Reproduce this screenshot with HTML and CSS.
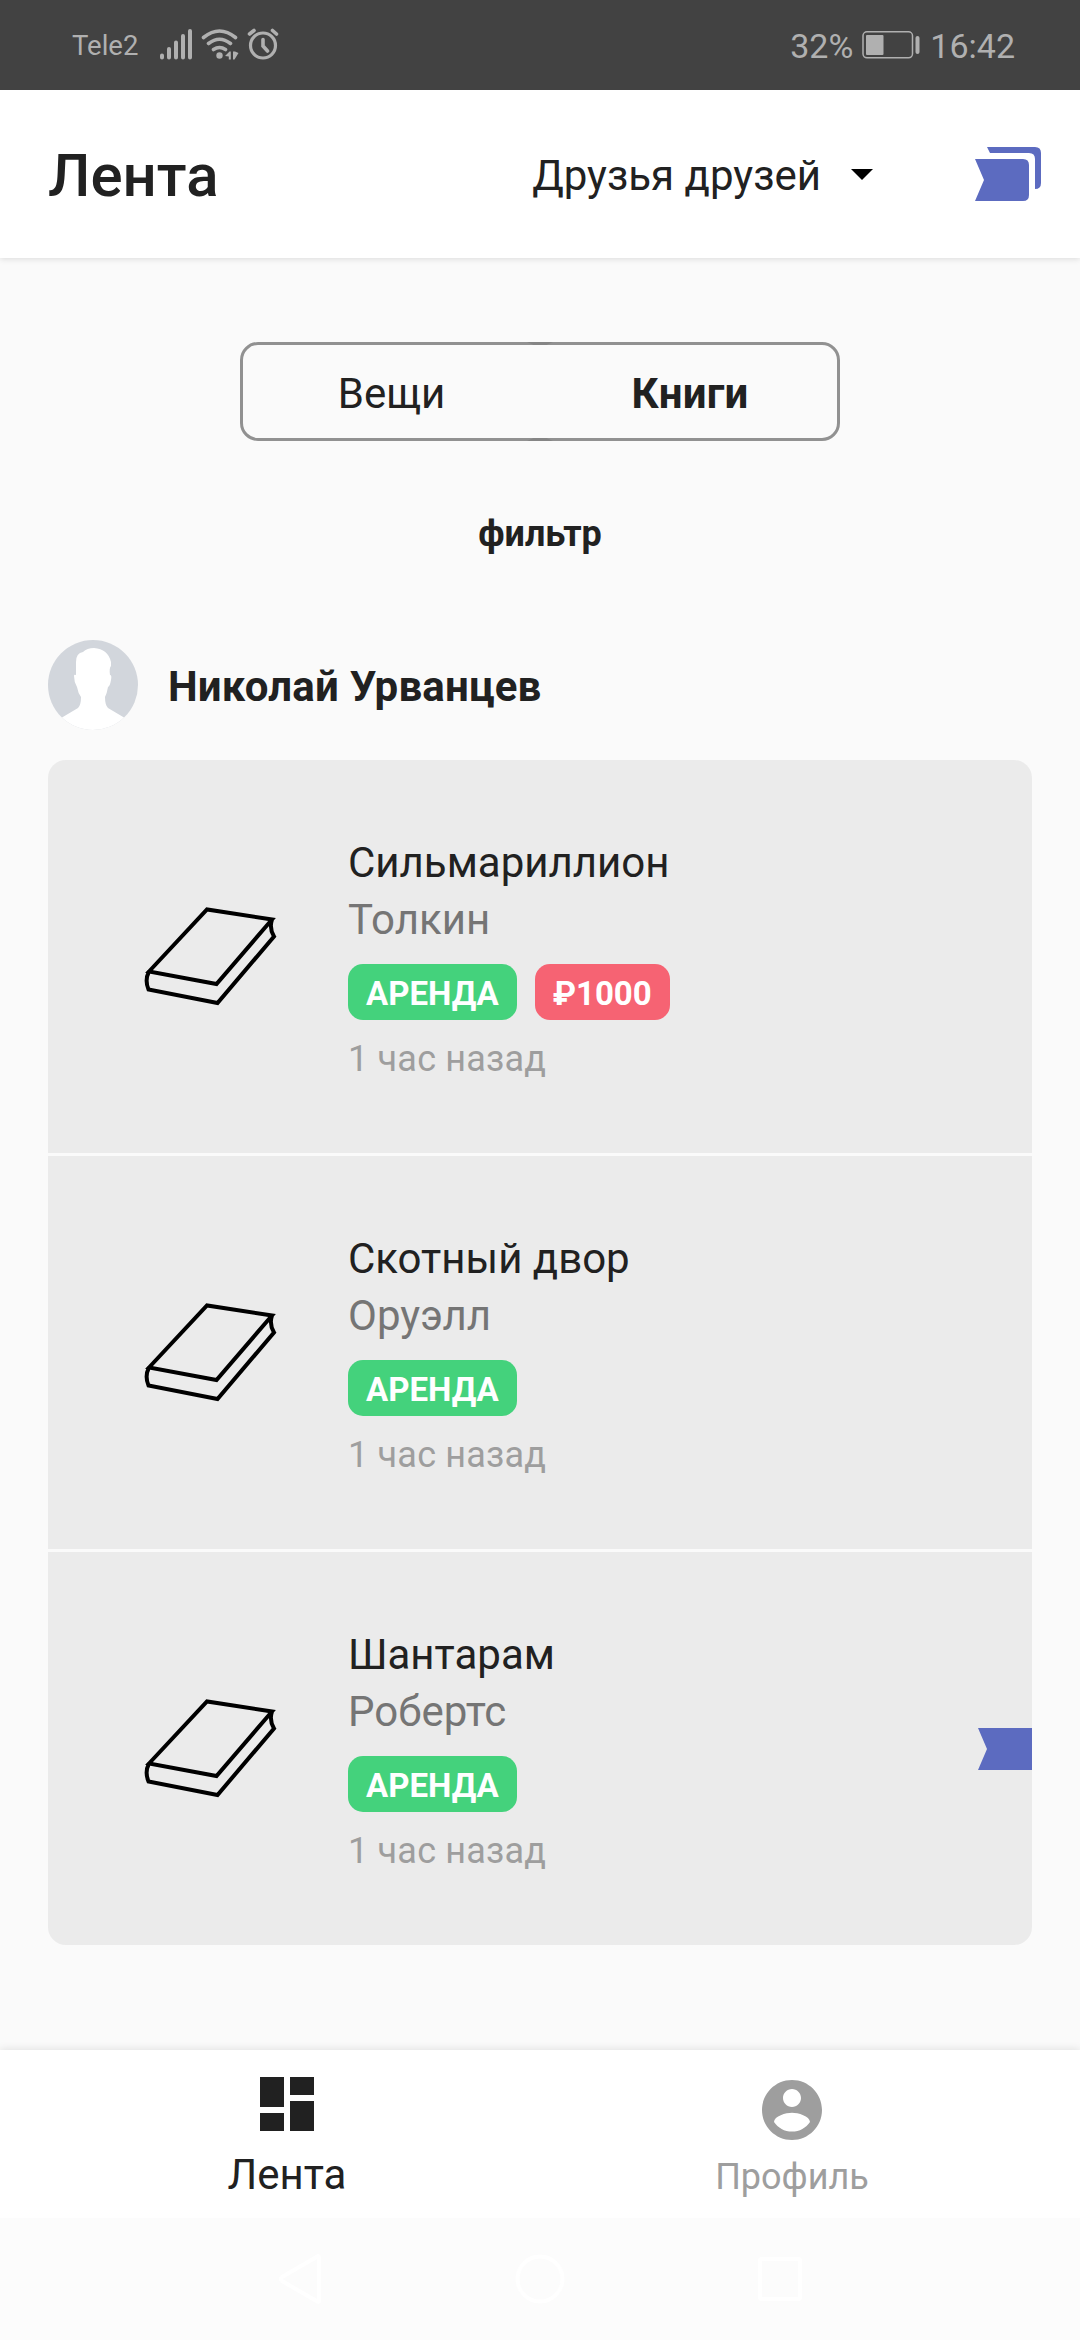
FILE: index.html
```html
<!DOCTYPE html>
<html lang="ru">
<head>
<meta charset="utf-8">
<title>Лента</title>
<link rel="stylesheet" href="styles.css">
</head>
<body>
<div class="status">
  <span class="carrier">Tele2</span>
  <svg class="status-icons" width="122" height="36" viewBox="158 28 122 36" fill="none" stroke="#b0b0b0" stroke-linecap="round">
    <path stroke-width="4" d="M162 56.500v2M169 50v8.500M176 43.500v15M183 37v21.500M190 32v26.500"/>
    <path stroke-width="3.600" d="M203.500 38.500Q219.500 25.500 235.500 38.500M208.500 44.500Q219.500 36 230.500 44.500M213.500 50.500Q219.500 46.500 225.500 50.500"/>
    <circle cx="219.500" cy="56.500" r="3.200" fill="#b0b0b0" stroke="none"/>
    <path fill="#b0b0b0" stroke="none" d="M225 57l4.500-4.500h1.300V60.500h-2v-3zM233 52.500h2l3.500 1.500-4 6.500h-1.500z"/>
    <circle cx="263" cy="46.500" r="12.500" stroke-width="3.200"/>
    <path stroke-width="3.600" d="M263 40.500v6.500l4.500 5M249.500 35l4.500-3.500M272.500 31.500l4 3.500"/>
  </svg>
  <span class="status-right">
    <span>32%</span>
    <svg class="battery" width="60" height="30" viewBox="0 0 60 30" fill="none">
      <rect x="1" y="1.800" width="49.500" height="26" rx="4" stroke="#b0b0b0" stroke-width="1.500"/>
      <rect x="4" y="5" width="17.500" height="20" rx="1" fill="#b0b0b0"/>
      <rect x="53.500" y="6" width="4" height="18" rx="2" fill="#b0b0b0"/>
    </svg>
    <span>16:42</span>
  </span>
</div>

<header class="header">
  <h1>Лента</h1>
  <div class="audience"><span>Друзья друзей</span><i class="caret"></i></div>
  <svg class="tags" width="66" height="54" viewBox="0 0 66 54" fill="#5c6bc0">
    <path d="M0 12H48Q54 12 54 18V48Q54 54 48 54H0L9 33Z"/>
    <path d="M12 0H60Q66 0 66 6V36Q66 42 60 42V12Q60 6 54 6H15Z"/>
  </svg>
</header>

<main class="feed">
  <div class="segments">
    <div class="segment">Вещи</div>
    <div class="segment active">Книги</div>
  </div>
  <div class="filter">фильтр</div>
  <div class="owner">
    <svg class="avatar" width="90" height="90" viewBox="0 0 90 90">
      <clipPath id="round"><circle cx="45" cy="45" r="45"/></clipPath>
      <g clip-path="url(#round)">
        <rect width="90" height="90" fill="#d2d6dc"/>
        <path fill="#fff" d="M28 35V22Q28 13 35 12Q39 8 46 8Q60 9 63 22V26Q61 28 62 35Q64 35 63 40Q62 46 60 47Q59 53 57 57Q57 65 60 68L76 77.500L80 90H10L14 77.500L30 68Q33 65 33 57Q30 53 29 47Q26 42 26 36Q26 34 28 35Z"/>
      </g>
    </svg>
    <span>Николай Урванцев</span>
  </div>

  <svg class="symbols" width="0" height="0">
    <symbol id="book" viewBox="0 0 134 108">
      <path fill="none" stroke="#000" stroke-width="4" d="M5 68.500L63 6.500L128 16.500L72.500 81ZM5 68.500Q0.500 77 4.500 86.500L73.500 100L130 33.500Q125 25 128 16.500"/>
    </symbol>
  </svg>

  <div class="cards">
    <article class="card">
      <svg class="book" width="134" height="108"><use href="#book"/></svg>
      <div class="info">
        <div class="title">Сильмариллион</div>
        <div class="author">Толкин</div>
        <div class="badges"><span class="badge rent">АРЕНДА</span><span class="badge price">₽1000</span></div>
        <div class="time">1 час назад</div>
      </div>
    </article>
    <article class="card">
      <svg class="book" width="134" height="108"><use href="#book"/></svg>
      <div class="info">
        <div class="title">Скотный двор</div>
        <div class="author">Оруэлл</div>
        <div class="badges"><span class="badge rent">АРЕНДА</span></div>
        <div class="time">1 час назад</div>
      </div>
    </article>
    <article class="card">
      <svg class="book" width="134" height="108"><use href="#book"/></svg>
      <div class="info">
        <div class="title">Шантарам</div>
        <div class="author">Робертс</div>
        <div class="badges"><span class="badge rent">АРЕНДА</span></div>
        <div class="time">1 час назад</div>
      </div>
      <svg class="ribbon" width="54" height="42" viewBox="0 0 54 42"><path fill="#5c6bc0" d="M0 0H54V42H0L9 21Z"/></svg>
    </article>
  </div>
</main>

<nav class="tabs">
  <div class="tab current">
    <svg width="72" height="72" viewBox="0 0 24 24" fill="#212121"><path d="M3 13h8V3H3v10zm0 8h8v-6H3v6zm10 0h8V11h-8v10zm0-18v6h8V3h-8z"/></svg>
    <span>Лента</span>
  </div>
  <div class="tab">
    <svg width="72" height="72" viewBox="0 0 24 24" fill="#9e9e9e"><path d="M12 2C6.480 2 2 6.480 2 12s4.480 10 10 10 10-4.480 10-10S17.520 2 12 2zm0 3c1.660 0 3 1.340 3 3s-1.340 3-3 3-3-1.340-3-3 1.340-3 3-3zm0 14.200c-2.500 0-4.710-1.280-6-3.220.030-1.990 4-3.080 6-3.080 1.990 0 5.970 1.090 6 3.080-1.290 1.940-3.500 3.220-6 3.220z"/></svg>
    <span>Профиль</span>
  </div>
</nav>

<div class="system">
  <svg width="48" height="52" viewBox="0 0 48 52"><path d="M41 4.500V47.500Q41 50 38.500 48L4 28Q1.500 26 4 24L38.500 4Q41 2 41 4.500Z"/></svg>
  <svg width="52" height="52" viewBox="0 0 52 52"><circle cx="26" cy="26" r="22.500"/></svg>
  <svg width="52" height="52" viewBox="0 0 52 52"><rect x="6" y="6" width="40" height="40" rx="2"/></svg>
</div>
</body>
</html>
```
FILE: styles.css
```css
* { box-sizing: border-box; }
body {
  margin: 0;
  width: 1080px;
  height: 2340px;
  overflow: hidden;
  display: flex;
  flex-direction: column;
  background: #fafafa;
  color: #212121;
  font-family: Roboto, sans-serif;
  font-size: 42px;
}
.status {
  height: 90px;
  display: flex;
  align-items: center;
  padding: 0 65px 0 72px;
  background: #424242;
  color: #b0b0b0;
  position: relative;
  z-index: 2;
}
.carrier { width: 86px; font-size: 27.500px; }
.status-icons { flex: none; }
.status-right {
  margin-left: auto;
  display: flex;
  align-items: center;
  font-size: 34px;
  line-height: 42px;
}
.status-right span { padding-top: 2px; }
.battery { margin: 0 8px 0 9px; }

.header {
  height: 168px;
  display: flex;
  align-items: center;
  padding: 0 39px 0 48px;
  background: #fff;
  box-shadow: 0 1px 6px rgba(0, 0, 0, .13);
  z-index: 1;
}
h1 { margin: 0; padding-top: 4px; font-size: 60px; font-weight: 500; line-height: 72px; }
.audience {
  margin-left: auto;
  margin-right: 102px;
  display: flex;
  align-items: center;
  gap: 30px;
  line-height: 50px;
}
.audience span { padding-top: 3px; }
.caret {
  border: 11px solid transparent;
  border-top-color: #000;
  border-bottom: 0;
}

.feed {
  height: 1792px;
  display: flex;
  flex-direction: column;
  padding: 84px 48px 0;
}
.segments {
  position: relative;
  align-self: center;
  width: 600px;
  height: 99px;
  display: grid;
  grid-template-columns: 1fr 1fr;
  border: 3px solid #919191;
  border-radius: 18px;
}
.segments::before,
.segments::after {
  content: "";
  position: absolute;
  left: 50%;
  width: 26px;
  height: 3px;
  margin-left: -13px;
  background: #858585;
}
.segments::before { top: -3px; clip-path: polygon(0 0, 100% 0, 75% 100%, 25% 100%); }
.segments::after { bottom: -3px; clip-path: polygon(25% 0, 75% 0, 100% 100%, 0 100%); }
.segment { text-align: center; line-height: 98px; }
.segment.active { padding-left: 3px; font-weight: 700; letter-spacing: .2px; }
.filter {
  margin-top: 72px;
  text-align: center;
  font-size: 36px;
  font-weight: 700;
  line-height: 42px;
}
.owner {
  margin-top: 85px;
  display: flex;
  align-items: center;
  gap: 30px;
  font-weight: 700;
  letter-spacing: .2px;
}
.owner span { padding-top: 2px; }
.symbols { display: block; height: 0; }
.cards {
  margin-top: 30px;
  display: flex;
  flex-direction: column;
  gap: 3px;
  border-radius: 18px;
  overflow: hidden;
}
.card {
  height: 393px;
  display: flex;
  align-items: center;
  padding-left: 96px;
  background: #ebebeb;
}
.book { flex: none; width: 134px; height: 108px; }
.info { margin-left: 70px; flex: 1; }
.title, .author { line-height: 57px; }
.author { color: #757575; }
.badges { display: flex; gap: 18px; margin-top: 16px; }
.badge {
  height: 56px;
  padding: 0 18px;
  border-radius: 15px;
  color: #fff;
  font-size: 33px;
  font-weight: 700;
  line-height: 59px;
}
.rent { background: #44d27c; }
.price { background: #f66373; }
.time { margin-top: 18px; color: #9e9e9e; font-size: 36px; line-height: 42px; letter-spacing: .2px; }

.tabs {
  height: 168px;
  display: grid;
  grid-template-columns: 574px 436px;
  background: #fff;
  box-shadow: 0 -1px 8px rgba(0, 0, 0, .1);
}
.tab {
  display: flex;
  flex-direction: column;
  align-items: center;
  gap: 10px;
  padding-top: 24px;
  color: #9e9e9e;
  font-size: 36px;
}
.current { color: #212121; font-size: 42px; padding-top: 18px; }
.system {
  position: relative;
  flex: 1;
  display: flex;
  align-items: center;
  justify-content: space-between;
  padding: 0 274px 0 278px;
  background: #fcfcfc;
}
.system svg { fill: none; stroke: #fff; stroke-width: 4; }
```
